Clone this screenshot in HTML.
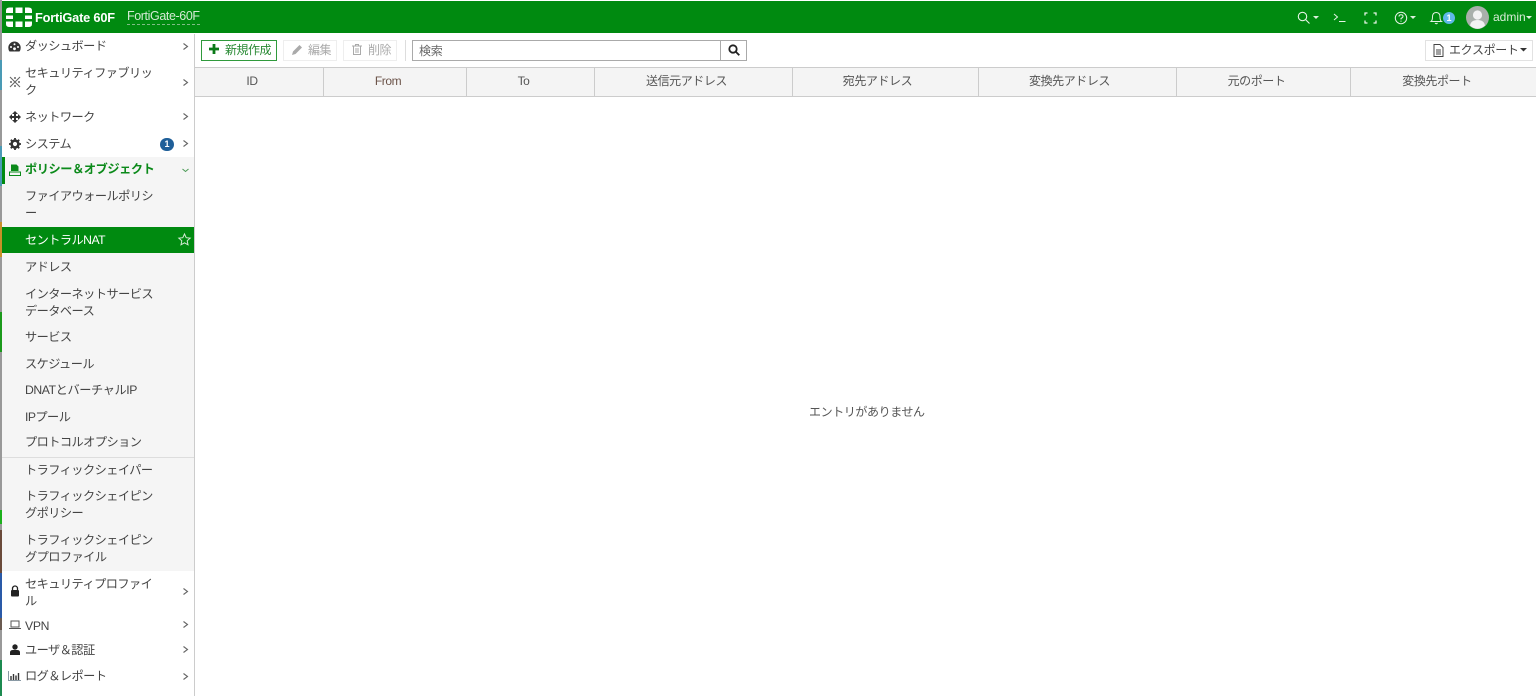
<!DOCTYPE html>
<html lang="ja">
<head>
<meta charset="utf-8">
<title>FortiGate 60F</title>
<style>
html,body{margin:0;padding:0;background:#fff;}
body{width:1536px;height:696px;position:relative;overflow:hidden;font-family:"Liberation Sans","Noto Sans CJK JP",sans-serif;font-size:12.2px;letter-spacing:-.55px;color:#444;filter:blur(.3px);}
.a{position:absolute;white-space:nowrap;line-height:17px;}
svg{position:absolute;display:block;overflow:visible;}
.th{position:absolute;top:68px;height:28px;line-height:27px;text-align:center;border-right:1px solid #ccc;box-sizing:border-box;font-size:12px;letter-spacing:-.43px;color:#555;}
.btn{position:absolute;top:40px;height:21px;box-sizing:border-box;background:#fff;border:1px solid #eee;color:#aaa;line-height:18px;font-size:12px;letter-spacing:-.5px;white-space:nowrap;}
.chev{position:absolute;left:182px;width:7px;height:9px;}
</style>
</head>
<body>
<!-- left edge strip -->
<div style="position:absolute;left:0;top:0;width:2px;height:696px;background:#999"></div>
<div style="position:absolute;left:0;top:60px;width:2px;height:30px;background:#4a9ab5"></div>
<div style="position:absolute;left:0;top:146px;width:2px;height:40px;background:#4a9ab5"></div>
<div style="position:absolute;left:0;top:222px;width:2px;height:35px;background:#c89028"></div>
<div style="position:absolute;left:0;top:312px;width:2px;height:40px;background:#1c9a1c"></div>
<div style="position:absolute;left:0;top:510px;width:2px;height:14px;background:#1cb01c"></div>
<div style="position:absolute;left:0;top:530px;width:2px;height:60px;background:#6a4a3a"></div>
<div style="position:absolute;left:0;top:590px;width:2px;height:40px;background:#6a5a50"></div>
<div style="position:absolute;left:0;top:573px;width:2px;height:45px;background:#2a5aa8"></div>
<div style="position:absolute;left:0;top:660px;width:2px;height:36px;background:#1c8a50"></div>

<!-- top bar -->
<div style="position:absolute;left:2px;top:1px;width:1534px;height:32px;background:#008a10"></div>
<!-- logo -->
<svg style="left:6px;top:7px" width="26" height="20" viewBox="0 0 26 20" fill="#fff">
<path d="M0 6V3.5Q0 .5 3.5 .5H7V6Z"/><rect x="9.5" y=".5" width="7" height="5.5"/><path d="M19 .5H22.5Q26 .5 26 3.5V6H19Z"/>
<rect x="0" y="8.5" width="7" height="3.5"/><rect x="19" y="8.5" width="7" height="3.5"/>
<path d="M0 14.5H7V20H3.5Q0 20 0 17Z"/><rect x="9.5" y="14.5" width="7" height="5.5"/><path d="M19 14.5H26V17Q26 20 22.5 20H19Z"/>
</svg>
<div class="a" style="left:35px;top:9px;color:#fff;font-weight:bold;font-size:12.8px;letter-spacing:-.2px">FortiGate 60F</div>
<div class="a" style="left:127px;top:9px;color:#d4ead4;font-size:12.5px;letter-spacing:-.4px;border-bottom:1px dashed #7fbc85;line-height:15px">FortiGate-60F</div>

<!-- top right icons -->
<svg style="left:1297px;top:11px" width="14" height="14" viewBox="0 0 14 14" fill="none" stroke="#e6f3e6" stroke-width="1.1"><circle cx="5.5" cy="5.5" r="4.2"/><path d="M8.6 8.6L12.5 12.5"/></svg>
<svg style="left:1313px;top:16px" width="6" height="4" viewBox="0 0 6 4" fill="#dcefdc"><path d="M0 0H6L3 3Z"/></svg>
<svg style="left:1333px;top:13px" width="13" height="10" viewBox="0 0 13 10" fill="none" stroke="#e6f3e6" stroke-width="1"><path d="M1 1L4.5 4L1 7M6 8.5H12.5"/></svg>
<svg style="left:1364px;top:12px" width="13" height="12" viewBox="0 0 13 12" fill="none" stroke="#e6f3e6" stroke-width="1.3"><path d="M1 3.5V1H3.5M9.5 1H12V3.5M12 8.5V11H9.5M3.5 11H1V8.5"/></svg>
<svg style="left:1394px;top:11px" width="14" height="14" viewBox="0 0 14 14" fill="none" stroke="#e6f3e6" stroke-width="1"><circle cx="7" cy="7" r="5.7"/><path d="M5 5.6Q5 3.8 7 3.8Q9 3.8 9 5.4Q9 6.5 7 7.5V8.5M7 9.6V10.8"/></svg>
<svg style="left:1410px;top:16px" width="6" height="4" viewBox="0 0 6 4" fill="#dcefdc"><path d="M0 0H6L3 3Z"/></svg>
<svg style="left:1430px;top:11px" width="13" height="14" viewBox="0 0 13 14" fill="none" stroke="#e6f3e6" stroke-width="1"><path d="M1 10.5Q2.5 9.5 2.5 6Q2.5 1.5 6.2 1.5Q10 1.5 10 6Q10 9.5 11.5 10.5ZM5 12Q6.2 13.5 7.5 12"/></svg>
<div class="a" style="left:1443px;top:12px;width:12px;height:12px;border-radius:50%;background:#5fb8e8;color:#fff;font-size:9px;font-weight:bold;line-height:12px;text-align:center;letter-spacing:0">1</div>
<svg style="left:1466px;top:6px" width="23" height="23" viewBox="0 0 23 23"><circle cx="11.5" cy="11.5" r="11.5" fill="#a9b0ab"/><circle cx="11.5" cy="9" r="4.6" fill="#f2f2f2"/><path d="M4 19.5Q5 14 11.5 14Q18 14 19 19.5Q15.5 22.8 11.5 22.8Q7.5 22.8 4 19.5Z" fill="#f2f2f2"/></svg>
<div class="a" style="left:1493px;top:9px;color:#d8ecd8;font-size:12px;letter-spacing:0">admin</div>
<svg style="left:1526px;top:16px" width="6" height="4" viewBox="0 0 6 4" fill="#dcefdc"><path d="M0 0H6L3 3Z"/></svg>

<!-- sidebar -->
<div style="position:absolute;left:194px;top:34px;width:1px;height:662px;background:#ccc"></div>
<div style="position:absolute;left:2px;top:157px;width:192px;height:414px;background:#f5f5f5"></div>
<div style="position:absolute;left:2px;top:157px;width:3px;height:27px;background:#008a10"></div>
<div style="position:absolute;left:2px;top:227px;width:192px;height:26px;background:#008a10"></div>
<div style="position:absolute;left:2px;top:457px;width:192px;height:1px;background:#ddd"></div>

<div class="a" style="left:25px;top:38px">ダッシュボード</div>
<div class="a" style="left:25px;top:65px">セキュリティファブリッ</div>
<div class="a" style="left:25px;top:82px">ク</div>
<div class="a" style="left:25px;top:109px">ネットワーク</div>
<div class="a" style="left:25px;top:136px">システム</div>
<div class="a" style="left:25px;top:161px;color:#0b8a1a;font-weight:bold;letter-spacing:-.42px">ポリシー＆オブジェクト</div>
<div class="a" style="left:25px;top:188px">ファイアウォールポリシ</div>
<div class="a" style="left:25px;top:205px">ー</div>
<div class="a" style="left:25px;top:232px;color:#fff">セントラルNAT</div>
<div class="a" style="left:25px;top:259px">アドレス</div>
<div class="a" style="left:25px;top:286px">インターネットサービス</div>
<div class="a" style="left:25px;top:303px">データベース</div>
<div class="a" style="left:25px;top:329px">サービス</div>
<div class="a" style="left:25px;top:356px">スケジュール</div>
<div class="a" style="left:25px;top:382px;letter-spacing:-.4px">DNATとバーチャルIP</div>
<div class="a" style="left:25px;top:409px">IPプール</div>
<div class="a" style="left:25px;top:434px">プロトコルオプション</div>
<div class="a" style="left:25px;top:462px">トラフィックシェイパー</div>
<div class="a" style="left:25px;top:488px">トラフィックシェイピン</div>
<div class="a" style="left:25px;top:505px">グポリシー</div>
<div class="a" style="left:25px;top:532px">トラフィックシェイピン</div>
<div class="a" style="left:25px;top:549px">グプロファイル</div>
<div class="a" style="left:25px;top:576px">セキュリティプロファイ</div>
<div class="a" style="left:25px;top:593px">ル</div>
<div class="a" style="left:25px;top:618px;letter-spacing:-.3px">VPN</div>
<div class="a" style="left:25px;top:642px">ユーザ＆認証</div>
<div class="a" style="left:25px;top:668px">ログ＆レポート</div>

<!-- sidebar icons -->
<svg style="left:8px;top:41px" width="13" height="11" viewBox="0 0 13 11"><path d="M6.5 0.5A6.2 6.2 0 0 0 .3 6.7Q.3 9 1.5 10.5H11.5Q12.7 9 12.7 6.7A6.2 6.2 0 0 0 6.5 .5Z" fill="#333"/><circle cx="3" cy="6" r="1" fill="#fff"/><circle cx="6.5" cy="3.2" r="1" fill="#fff"/><circle cx="10" cy="6" r="1" fill="#fff"/><circle cx="6.5" cy="7.8" r="1.4" fill="#fff"/></svg>
<svg style="left:9px;top:76px" width="12" height="12" viewBox="0 0 12 12" stroke="#666" stroke-width="1.1" fill="none"><path d="M1 1L11 11M11 1L1 11"/><circle cx="6" cy="2" r="1" fill="#666" stroke="none"/><circle cx="2" cy="6" r="1" fill="#666" stroke="none"/><circle cx="10" cy="6" r="1" fill="#666" stroke="none"/><circle cx="6" cy="10" r="1" fill="#666" stroke="none"/></svg>
<svg style="left:9px;top:111px" width="12" height="12" viewBox="0 0 12 12" fill="#333"><path d="M6 0L9 3H7V5H9V3L12 6L9 9V7H7V9H9L6 12L3 9H5V7H3V9L0 6L3 3V5H5V3H3Z"/></svg>
<svg style="left:9px;top:138px" width="12" height="12" viewBox="0 0 12 12"><circle cx="6" cy="6" r="3.4" fill="none" stroke="#333" stroke-width="2.6"/><path d="M6 0V2M6 10V12M0 6H2M10 6H12M1.8 1.8L3.2 3.2M8.8 8.8L10.2 10.2M1.8 10.2L3.2 8.8M8.8 3.2L10.2 1.8" stroke="#333" stroke-width="1.8"/></svg>
<div class="a" style="left:160px;top:138px;width:14px;height:13px;border-radius:7px;background:#1f5f99;color:#fff;font-size:9px;font-weight:bold;line-height:13px;text-align:center;letter-spacing:0">1</div>
<svg style="left:9px;top:164px" width="12" height="12" viewBox="0 0 12 12" fill="#0b8a1a"><path d="M2 0.5H7.5L9.5 2.5V7H2Z"/><path d="M.5 8H11.5V11.5H.5Z" fill="none" stroke="#0b8a1a"/></svg>
<svg style="left:178px;top:233px" width="13" height="13" viewBox="0 0 13 13" fill="none" stroke="#d6ebd6" stroke-width="1"><path d="M6.5 1L8.2 4.7L12.2 5.1L9.2 7.8L10 11.8L6.5 9.8L3 11.8L3.8 7.8L.8 5.1L4.8 4.7Z"/></svg>
<svg style="left:10px;top:585px" width="10" height="12" viewBox="0 0 10 12"><path d="M2.5 5V3.5A2.5 2.5 0 0 1 7.5 3.5V5" fill="none" stroke="#222" stroke-width="1.3"/><rect x="1" y="5" width="8" height="6.5" rx="1" fill="#222"/></svg>
<svg style="left:9px;top:620px" width="12" height="10" viewBox="0 0 12 10" fill="none" stroke="#555" stroke-width="1"><rect x="2" y="1" width="8" height="6"/><path d="M0 8.5H12"/></svg>
<svg style="left:10px;top:644px" width="10" height="11" viewBox="0 0 10 11" fill="#222"><circle cx="5" cy="3" r="2.7"/><path d="M0 11V8.5Q0 6 3 6H7Q10 6 10 8.5V11Z"/></svg>
<svg style="left:8px;top:671px" width="13" height="10" viewBox="0 0 13 10"><path d="M.5 0V9.5H13" fill="none" stroke="#8a9aa5"/><path d="M3 5V9M5.5 3V9M8 4.5V9M10.5 2V9" stroke="#333" stroke-width="1.4"/></svg>

<!-- chevrons -->
<svg class="chev" style="top:42px" viewBox="0 0 7 9" fill="none" stroke="#666" stroke-width="1.1"><path d="M1.5 1.5L5.5 4.5L1.5 7.5"/></svg>
<svg class="chev" style="top:78px" viewBox="0 0 7 9" fill="none" stroke="#666" stroke-width="1.1"><path d="M1.5 1.5L5.5 4.5L1.5 7.5"/></svg>
<svg class="chev" style="top:112px" viewBox="0 0 7 9" fill="none" stroke="#666" stroke-width="1.1"><path d="M1.5 1.5L5.5 4.5L1.5 7.5"/></svg>
<svg class="chev" style="top:139px" viewBox="0 0 7 9" fill="none" stroke="#666" stroke-width="1.1"><path d="M1.5 1.5L5.5 4.5L1.5 7.5"/></svg>
<svg style="left:181px;top:168px" width="9" height="6" viewBox="0 0 9 6" fill="none" stroke="#4a9a55" stroke-width="1"><path d="M1.5 1L4.5 3.5L7.5 1"/></svg>
<svg class="chev" style="top:587px" viewBox="0 0 7 9" fill="none" stroke="#666" stroke-width="1.1"><path d="M1.5 1.5L5.5 4.5L1.5 7.5"/></svg>
<svg class="chev" style="top:620px" viewBox="0 0 7 9" fill="none" stroke="#666" stroke-width="1.1"><path d="M1.5 1.5L5.5 4.5L1.5 7.5"/></svg>
<svg class="chev" style="top:645px" viewBox="0 0 7 9" fill="none" stroke="#666" stroke-width="1.1"><path d="M1.5 1.5L5.5 4.5L1.5 7.5"/></svg>
<svg class="chev" style="top:672px" viewBox="0 0 7 9" fill="none" stroke="#666" stroke-width="1.1"><path d="M1.5 1.5L5.5 4.5L1.5 7.5"/></svg>

<!-- toolbar -->
<div class="btn" style="left:201px;width:76px;border-color:#2f9a3c;color:#2a8a35"><span style="position:absolute;left:23px;top:0">新規作成</span></div>
<svg style="left:209px;top:44px" width="10" height="10" viewBox="0 0 10 10" fill="#0b7a18"><path d="M3.6 0H6.4V3.6H10V6.4H6.4V10H3.6V6.4H0V3.6H3.6Z"/></svg>
<div class="btn" style="left:283px;width:54px"><span style="position:absolute;left:24px;top:0">編集</span></div>
<svg style="left:292px;top:44px" width="11" height="11" viewBox="0 0 11 11" fill="#aaa"><path d="M0 11L1 7.5L7.5 1L10 3.5L3.5 10Z"/></svg>
<div class="btn" style="left:343px;width:54px"><span style="position:absolute;left:24px;top:0">削除</span></div>
<svg style="left:352px;top:44px" width="10" height="11" viewBox="0 0 10 11" fill="none" stroke="#aaa" stroke-width="1"><path d="M0 2H10M3.5 2V.5H6.5V2M1.5 2V10.5H8.5V2M4 4V9M6 4V9"/></svg>
<div style="position:absolute;left:405px;top:40px;width:1px;height:21px;background:#ddd"></div>
<div style="position:absolute;left:412px;top:40px;width:309px;height:21px;box-sizing:border-box;border:1px solid #aaa;background:#fff"></div>
<div class="a" style="left:419px;top:43px;color:#666;font-size:12px;letter-spacing:-.3px">検索</div>
<div style="position:absolute;left:720px;top:40px;width:27px;height:21px;box-sizing:border-box;border:1px solid #aaa;background:#fff"></div>
<svg style="left:728px;top:44px" width="12" height="12" viewBox="0 0 12 12" fill="none" stroke="#222" stroke-width="1.8"><circle cx="5" cy="5" r="3.7"/><path d="M7.8 7.8L11.3 11.3"/></svg>
<div class="btn" style="left:1425px;width:108px;border-color:#e2e2e2;color:#444"><span style="position:absolute;left:23px;top:0;letter-spacing:-.35px">エクスポート</span></div>
<svg style="left:1433px;top:44px" width="11" height="13" viewBox="0 0 11 13" fill="none" stroke="#444" stroke-width="1"><path d="M1 .5H7L10 3.5V12.5H1ZM3 6H8M3 8H8M3 10H8"/></svg>
<svg style="left:1520px;top:48px" width="7" height="4" viewBox="0 0 7 4" fill="#333"><path d="M0 0H7L3.5 3.5Z"/></svg>

<!-- table header -->
<div style="position:absolute;left:195px;top:67px;width:1341px;height:30px;box-sizing:border-box;background:#f4f4f4;border-top:1px solid #ccc;border-bottom:1px solid #ccc"></div>
<div class="th" style="left:195px;width:129px;padding-right:14px">ID</div>
<div class="th" style="left:324px;width:143px;padding-right:14px;color:#6a5248">From</div>
<div class="th" style="left:467px;width:128px;padding-right:14px">To</div>
<div class="th" style="left:595px;width:198px;padding-right:14px">送信元アドレス</div>
<div class="th" style="left:793px;width:186px;padding-right:16px">宛先アドレス</div>
<div class="th" style="left:979px;width:198px;padding-right:16px">変換先アドレス</div>
<div class="th" style="left:1177px;width:174px;padding-right:14px">元のポート</div>
<div class="th" style="left:1351px;width:185px;border-right:0;padding-right:13px">変換先ポート</div>

<div class="a" style="left:809px;top:404px;font-size:12px;letter-spacing:-.4px;color:#555">エントリがありません</div>
</body>
</html>
